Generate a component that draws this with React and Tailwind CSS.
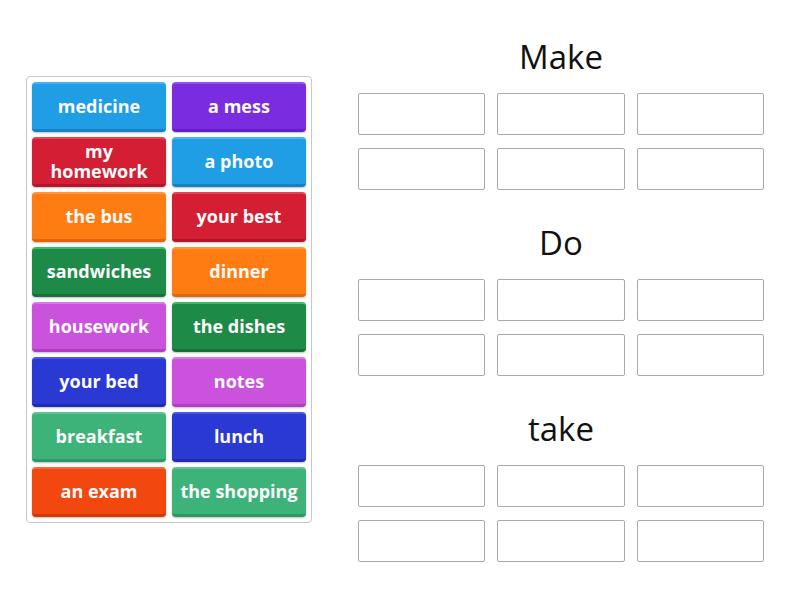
const tiles = [
  { text: "medicine", bg: "bg-[#1f9de5]", top: "border-t-[#47b2ef]", bot: "border-b-[#1682c4]" },
  { text: "a mess", bg: "bg-[#7a2ce0]", top: "border-t-[#9450ec]", bot: "border-b-[#6320c2]" },
  { text: "my homework", bg: "bg-[#d41e33]", top: "border-t-[#e04656]", bot: "border-b-[#b3162a]" },
  { text: "a photo", bg: "bg-[#1f9de5]", top: "border-t-[#47b2ef]", bot: "border-b-[#1682c4]" },
  { text: "the bus", bg: "bg-[#ff7c12]", top: "border-t-[#ff963f]", bot: "border-b-[#e0660a]" },
  { text: "your best", bg: "bg-[#d41e33]", top: "border-t-[#e04656]", bot: "border-b-[#b3162a]" },
  { text: "sandwiches", bg: "bg-[#1e8a47]", top: "border-t-[#34c05f]", bot: "border-b-[#17703a]" },
  { text: "dinner", bg: "bg-[#ff7c12]", top: "border-t-[#ff963f]", bot: "border-b-[#e0660a]" },
  { text: "housework", bg: "bg-[#cb52dc]", top: "border-t-[#d877e6]", bot: "border-b-[#b03dc2]" },
  { text: "the dishes", bg: "bg-[#1e8a47]", top: "border-t-[#34c05f]", bot: "border-b-[#17703a]" },
  { text: "your bed", bg: "bg-[#2a38d4]", top: "border-t-[#4a58e2]", bot: "border-b-[#1f2bb0]" },
  { text: "notes", bg: "bg-[#cb52dc]", top: "border-t-[#d877e6]", bot: "border-b-[#b03dc2]" },
  { text: "breakfast", bg: "bg-[#3db37a]", top: "border-t-[#5ec592]", bot: "border-b-[#2f9865]" },
  { text: "lunch", bg: "bg-[#2a38d4]", top: "border-t-[#4a58e2]", bot: "border-b-[#1f2bb0]" },
  { text: "an exam", bg: "bg-[#f2480f]", top: "border-t-[#f56a3a]", bot: "border-b-[#cf3a08]" },
  { text: "the shopping", bg: "bg-[#3db37a]", top: "border-t-[#5ec592]", bot: "border-b-[#2f9865]" },
];

const groups = ["Make", "Do", "take"];

const Tile = ({ text, bg, top, bot }) => (
  <div
    className={`h-[50px] rounded-[4px] border-t-2 border-b-[3px] ${bg} ${top} ${bot} shadow-[0_1px_2px_rgba(0,0,0,0.25)] flex items-center justify-center text-center text-[#fbfbfb] font-bold text-[18px] leading-[20px] px-1 pb-[2px]`}
  >
    {text === "my homework" ? (
      <span>
        my
        <br />
        homework
      </span>
    ) : (
      text
    )}
  </div>
);

export default function App() {
  return (
    <div
      className="w-[800px] h-[600px] bg-white flex"
      style={{ fontFamily: '"Open Sans", sans-serif' }}
    >
      {/* Tile bank */}
      <div className="ml-[26px] mt-[76px] w-[286px] h-[447px] border border-[#c8c8c8] rounded-[4px] p-[5px] grid grid-cols-2 gap-x-[6px] gap-y-[5px] content-start">
        {tiles.map((t, i) => (
          <Tile key={i} {...t} />
        ))}
      </div>

      {/* Drop groups */}
      <div className="ml-[46px] mt-[35px] w-[406px] flex flex-col gap-[31px]">
        {groups.map((g) => (
          <div key={g} className="flex flex-col">
            <div className="h-[44px] text-center text-[33px] leading-[44px] text-[#111]">
              {g}
            </div>
            <div className="mt-[14px] grid grid-cols-3 gap-x-[12px] gap-y-[13px]">
              {[0, 1, 2, 3, 4, 5].map((n) => (
                <div
                  key={n}
                  className="h-[42px] border border-[#a9a9a9] rounded-[2px] bg-white"
                />
              ))}
            </div>
          </div>
        ))}
      </div>
    </div>
  );
}
